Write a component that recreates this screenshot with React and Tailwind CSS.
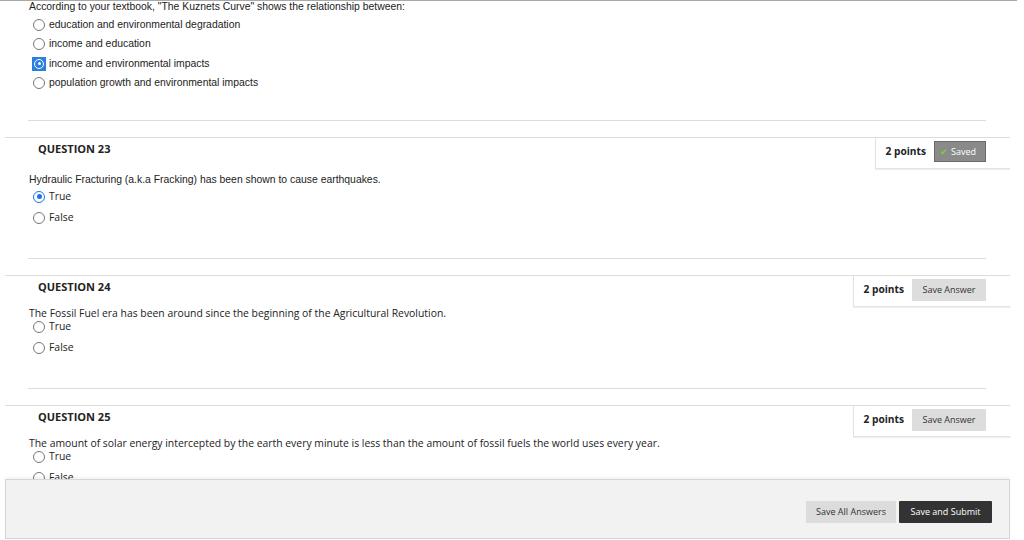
import React from 'react'

const arial = "font-['Liberation_Sans',Arial,sans-serif]"
const open = "font-['Open_Sans',sans-serif]"

function Radio({ checked, focused }) {
  if (focused) {
    return (
      <span className="flex h-[14px] w-[14px] items-center justify-center bg-[#2a7fe0]">
        <span className="flex h-[10px] w-[10px] items-center justify-center rounded-full border-[1.5px] border-white bg-[#2a7fe0]">
          <span className="h-[3px] w-[3px] rounded-full bg-white" />
        </span>
      </span>
    )
  }
  if (checked) {
    return (
      <span className="flex h-[12px] w-[12px] items-center justify-center rounded-full border-[1.5px] border-[#1a73e8] bg-white">
        <span className="h-[5px] w-[5px] rounded-full bg-[#1a73e8]" />
      </span>
    )
  }
  return <span className="block h-[12px] w-[12px] rounded-full border border-[#777] bg-white" />
}

function Option({ label, checked, focused, font, h }) {
  return (
    <div className={`flex items-center gap-[3px] pl-[32px] ${h}`}>
      <span className="flex w-[14px] justify-center">
        <Radio checked={checked} focused={focused} />
      </span>
      <span className={`${font} text-[10.4px] text-[#222]`}>{label}</span>
    </div>
  )
}

function Header({ num, saved }) {
  return (
    <div className="ml-[5px] flex w-[1005px] justify-between border-t border-[#dcdcdc]">
      <div className={`${open} pl-[33px] pt-[3px] text-[11px] font-bold text-[#222]`}>QUESTION {num}</div>
      <div className="flex h-[31px] items-start gap-[8px] border-b border-l border-[#e2e2e2] pl-[9px] pr-[24px] pt-[3px] shadow-[0_1px_1px_rgba(0,0,0,0.06)]">
        <span className={`${open} text-[10.2px] leading-[21px] font-bold text-[#222]`}>2 points</span>
        {saved ? (
          <span className={`${open} flex h-[21px] w-[52px] items-center gap-[3px] border border-[#6a6a6a] bg-[#8a8a8a] pl-[5px] text-[9px] text-white`}>
            <span className="text-[9px] text-[#7ed321]">✔</span>Saved
          </span>
        ) : (
          <span className={`${open} flex h-[22px] w-[74px] items-center justify-center bg-[#dddddd] text-[9px] text-[#333]`}>
            Save Answer
          </span>
        )}
      </div>
    </div>
  )
}

function Separator() {
  return <div className="ml-[28px] w-[958px] border-t border-[#dcdcdc]" />
}

export default function App() {
  return (
    <div className="relative h-[540px] w-[1024px] overflow-hidden bg-white">
      <div className="w-[1017px] border-t border-[#a8a8a8]" />

      {/* Question 22 (tail) */}
      <div className={`${arial} pl-[29px] text-[10.4px] leading-[11px] text-[#222]`}>
        According to your textbook, "The Kuznets Curve" shows the relationship between:
      </div>
      <div className="pt-[3px]">
        <Option font={arial} h="h-[19.5px]" label="education and environmental degradation" />
        <Option font={arial} h="h-[19.5px]" label="income and education" />
        <Option font={arial} h="h-[19.5px]" focused label="income and environmental impacts" />
        <Option font={arial} h="h-[19.5px]" label="population growth and environmental impacts" />
      </div>
      <div className="h-[27px]" />
      <Separator />
      <div className="h-[16px]" />

      {/* Question 23 */}
      <Header num={23} saved />
      <div className={`${arial} pl-[29px] pt-[5px] text-[10.4px] leading-[11px] text-[#222]`}>
        Hydraulic Fracturing (a.k.a Fracking) has been shown to cause earthquakes.
      </div>
      <div className="pt-[1px]">
        <Option font={open} h="h-[21px]" checked label="True" />
        <Option font={open} h="h-[21px]" label="False" />
      </div>
      <div className="h-[30px]" />
      <Separator />
      <div className="h-[16px]" />

      {/* Question 24 */}
      <Header num={24} />
      <div className={`${open} pl-[29px] text-[10.4px] leading-[12px] text-[#222]`}>
        The Fossil Fuel era has been around since the beginning of the Agricultural Revolution.
      </div>
      <div className="pt-[1px]">
        <Option font={open} h="h-[14px]" label="True" />
        <Option font={open} h="h-[27px]" label="False" />
      </div>
      <div className="h-[27px]" />
      <Separator />
      <div className="h-[16px]" />

      {/* Question 25 */}
      <Header num={25} />
      <div className={`${open} pl-[29px] text-[10.4px] leading-[12px] text-[#222]`}>
        The amount of solar energy intercepted by the earth every minute is less than the amount of fossil fuels the world uses every year.
      </div>
      <div className="pt-[1px]">
        <Option font={open} h="h-[14px]" label="True" />
        <Option font={open} h="h-[27px]" label="False" />
      </div>

      {/* Sticky submit bar */}
      <div className="absolute left-[5px] top-[479px] flex h-[60px] w-[1005px] items-start justify-end gap-[3px] border border-[#d6d6d6] bg-[#f2f2f2] pr-[17px] pt-[21px] shadow-[0_-2px_3px_rgba(0,0,0,0.05)]">
        <span className={`${open} flex h-[22px] w-[90px] items-center justify-center bg-[#dcdcdc] text-[9px] text-[#333]`}>
          Save All Answers
        </span>
        <span className={`${open} flex h-[22px] w-[93px] items-center justify-center rounded-[1px] bg-[#333333] text-[9px] text-white`}>
          Save and Submit
        </span>
      </div>
    </div>
  )
}
